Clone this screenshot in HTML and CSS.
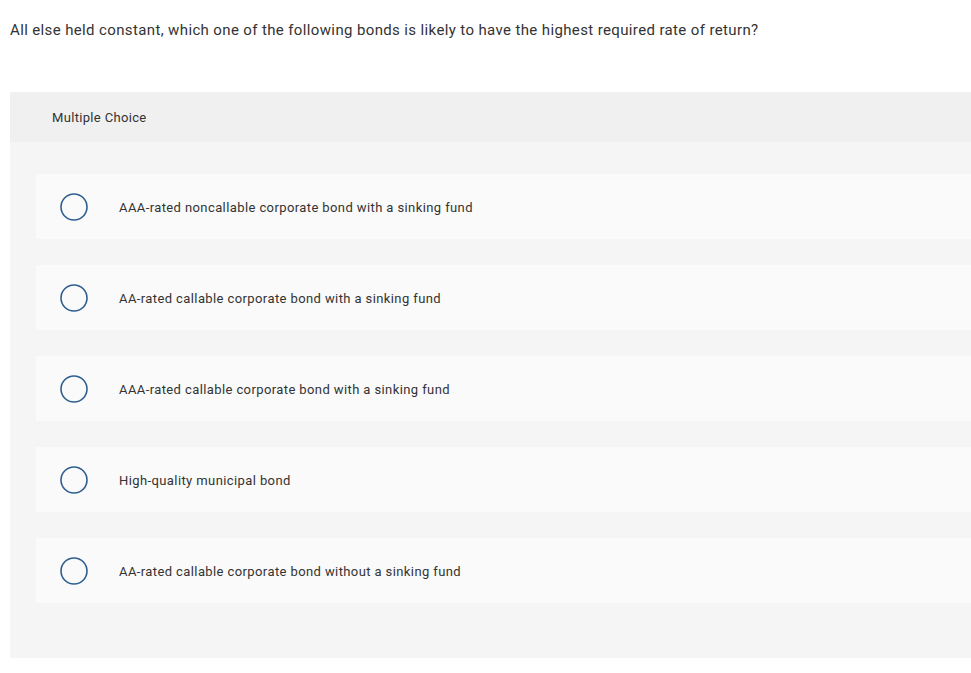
FILE: index.html
```html
<!DOCTYPE html>
<html>
<head>
<meta charset="utf-8">
<link rel="stylesheet" href="styles.css">
</head>
<body>
<p class="question">All else held constant, which one of the following bonds is likely to have the highest required rate of return?</p>
<div class="mc">
  <div class="mc-head">Multiple Choice</div>
  <div class="mc-body">
    <div class="option"><svg class="radio" width="28" height="28" viewBox="0 0 28 28"><circle cx="14" cy="14" r="13" fill="none" stroke="#2f5f8f" stroke-width="1.6"/></svg><span class="label">AAA-rated noncallable corporate bond with a sinking fund</span></div>
    <div class="option"><svg class="radio" width="28" height="28" viewBox="0 0 28 28"><circle cx="14" cy="14" r="13" fill="none" stroke="#2f5f8f" stroke-width="1.6"/></svg><span class="label">AA-rated callable corporate bond with a sinking fund</span></div>
    <div class="option"><svg class="radio" width="28" height="28" viewBox="0 0 28 28"><circle cx="14" cy="14" r="13" fill="none" stroke="#2f5f8f" stroke-width="1.6"/></svg><span class="label">AAA-rated callable corporate bond with a sinking fund</span></div>
    <div class="option"><svg class="radio" width="28" height="28" viewBox="0 0 28 28"><circle cx="14" cy="14" r="13" fill="none" stroke="#2f5f8f" stroke-width="1.6"/></svg><span class="label">High-quality municipal bond</span></div>
    <div class="option"><svg class="radio" width="28" height="28" viewBox="0 0 28 28"><circle cx="14" cy="14" r="13" fill="none" stroke="#2f5f8f" stroke-width="1.6"/></svg><span class="label">AA-rated callable corporate bond without a sinking fund</span></div>
  </div>
</div>
</body>
</html>
```
FILE: styles.css
```css
html, body {
  margin: 0;
  padding: 0;
  background: #ffffff;
}
body {
  font-family: Roboto, "Open Sans", Arial, sans-serif;
  color: #333333;
  overflow: hidden;
}
.question {
  margin: 0;
  padding: 20px 0 0 10px;
  font-size: 15px;
  line-height: 20px;
  height: 72px;
  letter-spacing: 0.37px;
}
.mc {
  margin-left: 10px;
  width: 975px;
  background: #f5f5f5;
}
.mc-head {
  background: #f0f0f0;
  height: 50px;
  box-sizing: border-box;
  padding: 18px 0 0 42px;
  font-size: 13px;
  line-height: 16px;
  letter-spacing: 0.33px;
}
.mc-body {
  padding: 32px 0 55px 26px;
  display: flex;
  flex-direction: column;
  gap: 26px;
}
.option {
  background: #fafafa;
  height: 65px;
  display: flex;
  align-items: center;
  padding-left: 24px;
}
.radio {
  flex: none;
  display: block;
}
.label {
  margin-left: 31px;
  font-size: 13px;
  line-height: 16px;
  letter-spacing: 0.4px;
  padding-top: 2px;
}
```
